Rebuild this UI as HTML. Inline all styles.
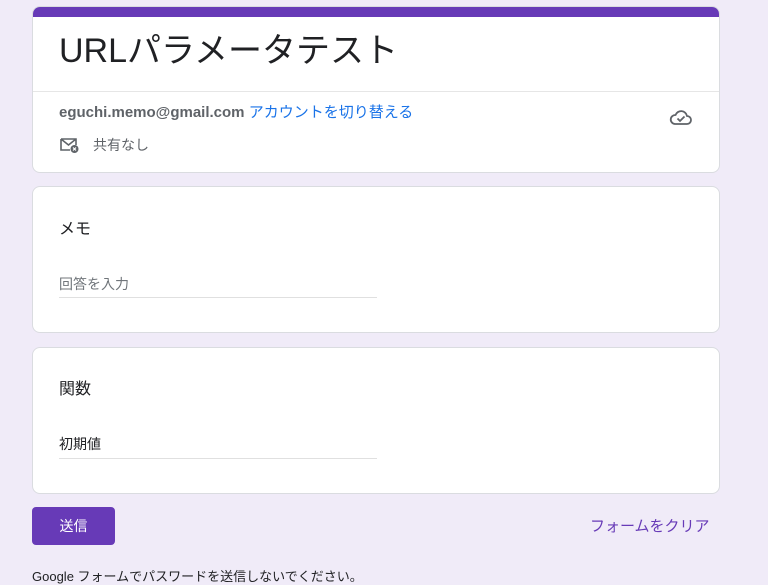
<!DOCTYPE html>
<html><head><meta charset="utf-8"><style>
*{box-sizing:border-box;margin:0;padding:0}
body{width:768px;height:569px;overflow:hidden;background:#f0ebf8;font-family:"Liberation Sans","Noto Sans CJK JP",sans-serif;color:#202124;position:relative}
.card{position:absolute;left:32px;width:688px;background:#fff;border:1px solid #dadce0;border-radius:8px}
.abs{position:absolute;white-space:nowrap}
</style></head><body>
<div class="card" style="top:6px;height:167px;overflow:hidden">
  <div style="height:10px;background:#673ab7"></div>
  <div class="abs" style="left:26px;top:24px;font-size:34px;line-height:40px">URLパラメータテスト</div>
  <div style="position:absolute;left:0;right:0;top:84px;border-top:1px solid #e6e6e6"></div>
  <div class="abs" style="left:26px;top:97px;font-size:15px;line-height:18px"><b style="color:#5f6368">eguchi.memo@gmail.com</b> <span style="color:#1a73e8">アカウントを切り替える</span></div>
  <svg class="abs" style="left:26px;top:129px" width="22" height="18" viewBox="0 0 22 18"><path d="M2 3h15v6M2 3v11h9M2 3l7.5 6L17 3" fill="none" stroke="#5f6368" stroke-width="1.6"/><circle cx="15.5" cy="13" r="4" fill="#5f6368"/><path d="M14 11.5l3 3M17 11.5l-3 3" stroke="#fff" stroke-width="1.2"/></svg>
  <div class="abs" style="left:60px;top:128px;font-size:14px;color:#5f6368">共有なし</div>
  <svg class="abs" style="left:636px;top:100px" width="24" height="20" viewBox="0 0 24 20"><path d="M6 17h12a4 4 0 0 0 0-8 6 6 0 0 0-11.5-1A4.5 4.5 0 0 0 6 17z" fill="none" stroke="#5f6368" stroke-width="1.8"/><path d="M8.5 11.5l2.5 2.5 4.5-4.5" fill="none" stroke="#5f6368" stroke-width="1.8"/></svg>
</div>
<div class="card" style="top:186px;height:147px">
  <div class="abs" style="left:26px;top:28px;font-size:16px">メモ</div>
  <div class="abs" style="left:26px;top:87px;font-size:14px;color:#70757a">回答を入力</div>
  <div style="position:absolute;left:26px;top:110px;width:318px;border-top:1px solid #e0e0e0"></div>
</div>
<div class="card" style="top:347px;height:147px">
  <div class="abs" style="left:26px;top:27px;font-size:16px">関数</div>
  <div class="abs" style="left:26px;top:86px;font-size:14px">初期値</div>
  <div style="position:absolute;left:26px;top:110px;width:318px;border-top:1px solid #e0e0e0"></div>
</div>
<div class="abs" style="left:32px;top:507px;width:83px;height:38px;background:#673ab7;border-radius:4px;color:#fff;font-size:14px;line-height:38px;text-align:center">送信</div>
<div class="abs" style="left:590px;top:515px;font-size:15px;color:#673ab7">フォームをクリア</div>
<div class="abs" style="left:32px;top:566px;font-size:13px;color:#202124">Google フォームでパスワードを送信しないでください。</div>
</body></html>
